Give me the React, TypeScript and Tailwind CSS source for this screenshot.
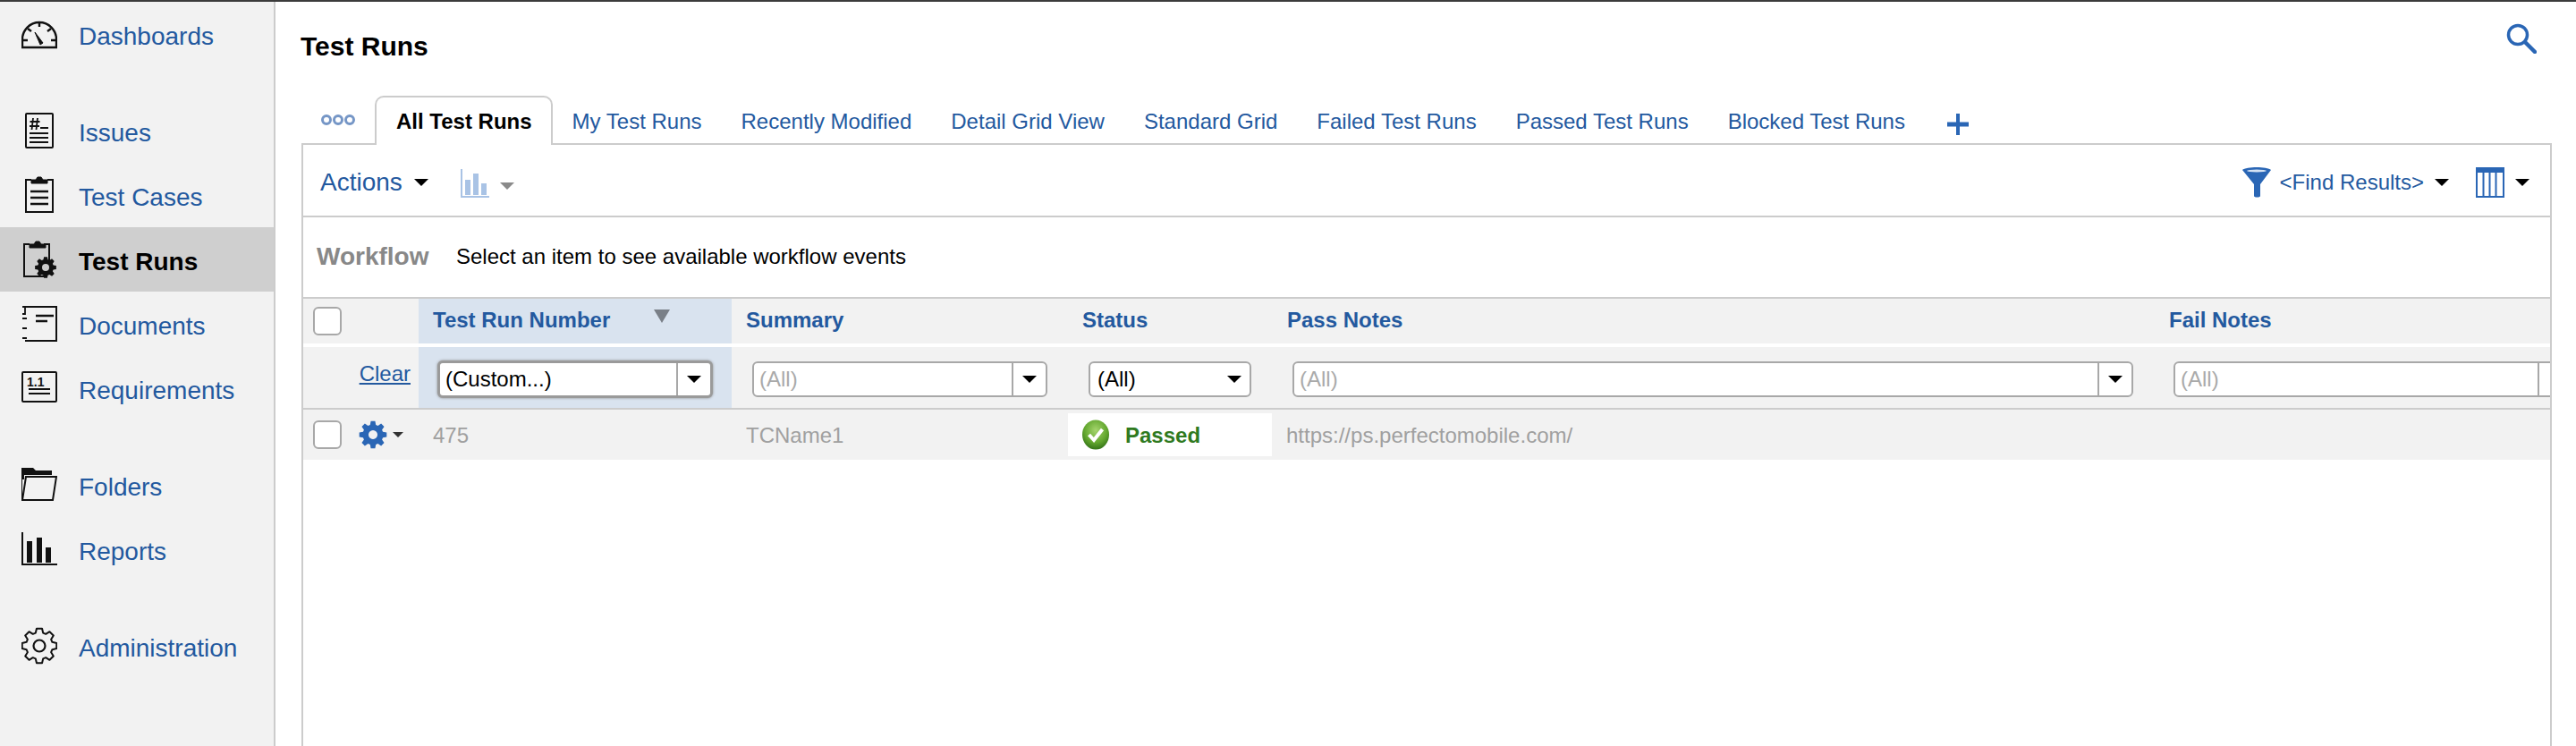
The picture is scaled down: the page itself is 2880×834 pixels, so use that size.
import { ReactNode } from "react";

const BLUE = "#2a66b5";

// builds a toothed wheel outline, used by every gear icon on the page
function gearPath(cx: number, cy: number, outer: number, inner: number, teeth: number) {
  const step = (Math.PI * 2) / teeth;
  const pts: string[] = [];
  for (let i = 0; i < teeth; i++) {
    const a = i * step - Math.PI / 2;
    const list: [number, number][] = [
      [inner, a - step * 0.36],
      [outer, a - step * 0.2],
      [outer, a + step * 0.2],
      [inner, a + step * 0.36],
    ];
    list.forEach(([r, t]) => {
      pts.push(`${(cx + r * Math.cos(t)).toFixed(2)} ${(cy + r * Math.sin(t)).toFixed(2)}`);
    });
  }
  return `M${pts.join("L")}Z`;
}

function NavIcon({ children }: { children: ReactNode }) {
  return (
    <svg width="40" height="48" viewBox="0 0 40 48" className="shrink-0 -mt-[2px]" fill="none" stroke="#111" strokeWidth="2">
      {children}
    </svg>
  );
}

const DashboardIcon = () => (
  <NavIcon>
    <path d="M1 37V28A19 19 0 0 1 39 28V37Z" strokeWidth="2.400" />
    <path d="M20 9v5M7 16l4 3M33 16l-4 3M2 29h5M38 29h-5" strokeWidth="2.400" />
    <path d="M15 20l9 12-3 2Z" fill="#111" strokeWidth="1" />
  </NavIcon>
);

const IssuesIcon = () => (
  <NavIcon>
    <rect x="5" y="3" width="30" height="38" rx="1" />
    <path d="M13 8l-1.500 13M18 8l-1.500 13M9.500 12h11M9 17h11" strokeWidth="1.800" />
    <path d="M21 19h9M9 25h21M9 30h21M9 35h21" strokeWidth="2.200" />
  </NavIcon>
);

const TestCasesIcon = () => (
  <NavIcon>
    <path d="M11 5H5v36h30V5h-6" />
    <path d="M11 9V5h5l2-3h4l2 3h5v4Z" fill="#111" strokeWidth="1" />
    <path d="M10 18h20M10 25h20M10 32h20" strokeWidth="2.400" />
  </NavIcon>
);

const TestRunsIcon = () => (
  <NavIcon>
    <path d="M9 5H3v36h24M31 24V5h-6" />
    <path d="M9 9V5h5l2-3h4l2 3h5v4Z" fill="#111" strokeWidth="1" />
    <path d={gearPath(27, 31, 12, 9, 8)} fill="#111" stroke="none" />
    <circle cx="27" cy="31" r="4" fill="#ccc" stroke="none" />
  </NavIcon>
);

const DocumentsIcon = () => (
  <NavIcon>
    <path d="M4 3h35v38H4" strokeWidth="2" />
    <path d="M1 3h3v8H1M1 16h5M1 27h5M1 38h5" strokeWidth="1.800" />
    <path d="M16 13h20M16 19h13" strokeWidth="2.400" />
  </NavIcon>
);

const RequirementsIcon = () => (
  <NavIcon>
    <rect x="1" y="4" width="38" height="33" rx="1" />
    <text x="6" y="20" fontSize="14" fontWeight="700" fill="#111" stroke="none" fontFamily="'Liberation Sans', sans-serif">1.1</text>
    <path d="M8 23h24M8 28h24" strokeWidth="2.200" />
  </NavIcon>
);

const FoldersIcon = () => (
  <NavIcon>
    <path d="M0 3h13l3 3h18v5H3v5H0Z" fill="#111" stroke="none" />
    <path d="M5 13h34l-4 26H1Z" />
    <path d="M0 8v31" strokeWidth="2" />
  </NavIcon>
);

const ReportsIcon = () => (
  <NavIcon>
    <path d="M1 3v36h39" />
    <rect x="6" y="13" width="6" height="24" fill="#111" stroke="none" />
    <rect x="17" y="9" width="6" height="28" fill="#111" stroke="none" />
    <rect x="27" y="20" width="6" height="17" fill="#111" stroke="none" />
  </NavIcon>
);

const AdminIcon = () => (
  <NavIcon>
    <path d={gearPath(20, 22, 19.500, 15, 8)} strokeLinejoin="round" />
    <circle cx="20" cy="22" r="6.500" strokeWidth="2.200" />
  </NavIcon>
);

const NAV_GROUPS = [
  [{ label: "Dashboards", icon: <DashboardIcon /> }],
  [
    { label: "Issues", icon: <IssuesIcon /> },
    { label: "Test Cases", icon: <TestCasesIcon /> },
    { label: "Test Runs", icon: <TestRunsIcon />, active: true },
    { label: "Documents", icon: <DocumentsIcon /> },
    { label: "Requirements", icon: <RequirementsIcon /> },
  ],
  [
    { label: "Folders", icon: <FoldersIcon /> },
    { label: "Reports", icon: <ReportsIcon /> },
  ],
  [{ label: "Administration", icon: <AdminIcon /> }],
];

const TABS = [
  "My Test Runs",
  "Recently Modified",
  "Detail Grid View",
  "Standard Grid",
  "Failed Test Runs",
  "Passed Test Runs",
  "Blocked Test Runs",
];

function Caret({ color = "#000", w = 16, h = 8 }: { color?: string; w?: number; h?: number }) {
  return (
    <svg width={w} height={h} viewBox="0 0 16 8" className="shrink-0" preserveAspectRatio="none">
      <polygon points="0,0 16,0 8,8" fill={color} />
    </svg>
  );
}

function Checkbox() {
  return <div className="w-[32px] h-[32px] shrink-0 rounded-[6px] border-2 border-[#a8a8a8] bg-white" />;
}

function ComboFilter({ width, drop = "w-[38px]" }: { width: string; drop?: string }) {
  return (
    <div className={`flex h-[40px] ${width} items-stretch rounded-[6px] border-2 border-[#a8a8a8] bg-white`}>
      <span className="flex-1 pl-[6px] leading-[36px] text-[#aaaaaa]">(All)</span>
      <span className={`flex ${drop} items-center justify-center border-l-2 border-[#a8a8a8]`}>
        <Caret />
      </span>
    </div>
  );
}

export default function App() {
  return (
    <div className="flex h-screen flex-col overflow-hidden bg-white font-['Liberation_Sans',Arial,sans-serif] text-[24px] text-[#23599f]">
      <div className="h-[2px] shrink-0 bg-[#3c3c3c]" />
      <div className="flex min-h-0 flex-1">
        {/* Sidebar */}
        <nav className="flex w-[308px] shrink-0 flex-col gap-[36px] border-r-2 border-[#cccccc] bg-[#f2f2f2]">
          {NAV_GROUPS.map((group, i) => (
            <div key={i}>
              {group.map((item) => (
                <div
                  key={item.label}
                  className={`flex h-[72px] items-center gap-[24px] pl-[24px] pt-[6px] text-[28px] ${
                    item.active ? "bg-[#cfcfcf] font-bold text-black" : ""
                  }`}
                >
                  {item.icon}
                  <span>{item.label}</span>
                </div>
              ))}
            </div>
          ))}
        </nav>

        {/* Main */}
        <main className="flex min-w-0 flex-1 flex-col pl-[29px] pr-[27px]">
          <div className="flex h-[105px] shrink-0 justify-between">
            <h1 className="mt-[33px] text-[30px] leading-[34px] font-bold text-black -ml-px">Test Runs</h1>
            <svg width="34" height="34" viewBox="0 0 34 34" className="mt-[24px] mr-[17px]" fill="none" stroke={BLUE}>
              <circle cx="13" cy="13" r="10.500" strokeWidth="3.500" />
              <path d="M21 21l11 11" strokeWidth="4.500" strokeLinecap="round" />
            </svg>
          </div>

          {/* Tabs */}
          <div className="relative z-10 -mb-[2px] flex h-[55px] shrink-0 items-stretch">
            <div className="flex w-[82px] items-center justify-center gap-[1px] pb-[1px]">
              {[0, 1, 2].map((d) => (
                <span key={d} className="h-[12px] w-[12px] rounded-full border-[3px] border-[#7596c6]" />
              ))}
            </div>
            <div className="rounded-t-[10px] border-2 border-b-0 border-[#cccccc] bg-white pl-[22px] pr-[21px] pt-[9px] font-bold text-black">
              All Test Runs
            </div>
            {TABS.map((tab) => (
              <div key={tab} className="px-[22px] pt-[11px]">
                {tab}
              </div>
            ))}
            <svg width="24" height="24" viewBox="0 0 24 24" className="mt-[20px] ml-[25px]" fill={BLUE}>
              <rect x="10" y="0" width="4" height="24" />
              <rect x="0" y="9.500" width="24" height="5" />
            </svg>
          </div>

          {/* Panel */}
          <div className="min-h-0 flex-1 overflow-hidden border-x-2 border-t-2 border-[#cccccc]">
            <div className="flex h-[81px] items-center justify-between border-b-2 border-[#cccccc] pl-[19px] pr-[23px] pt-[4px]">
              <div className="flex items-center">
                <span className="text-[28px]">Actions</span>
                <span className="ml-[13px]">
                  <Caret />
                </span>
                <svg width="32" height="32" viewBox="0 0 32 32" className="ml-[36px] mt-[2px]" fill="#a9c3e5">
                  <rect x="0" y="0" width="2" height="32" />
                  <rect x="0" y="30" width="32" height="2" />
                  <rect x="5" y="12" width="6" height="17" />
                  <rect x="14" y="5" width="6" height="24" />
                  <rect x="23" y="16" width="6" height="13" />
                </svg>
                <span className="ml-[12px] mt-[8px]">
                  <Caret color="#8a8a8a" />
                </span>
              </div>
              <div className="flex items-center">
                <svg width="32" height="34" viewBox="0 0 32 34" fill={BLUE}>
                  <path d="M0 3C4 -1 28 -1 32 3L20 19V32C20 34 13 34 13 32V19Z" />
                  <ellipse cx="16" cy="4" rx="11" ry="1.500" fill="#d5e2f3" />
                </svg>
                <span className="ml-[10px]">&lt;Find Results&gt;</span>
                <span className="ml-[12px]">
                  <Caret />
                </span>
                <svg width="32" height="34" viewBox="0 0 32 34" className="ml-[30px]" fill="none">
                  <rect x="1" y="1" width="30" height="32" stroke={BLUE} strokeWidth="2" />
                  <rect x="0" y="0" width="32" height="6" fill={BLUE} />
                  <path d="M8.500 6v28M15.500 6v28M22.500 6v28" stroke={BLUE} strokeWidth="2" />
                </svg>
                <span className="ml-[12px]">
                  <Caret />
                </span>
              </div>
            </div>

            <div className="flex h-[91px] items-center border-b-2 border-[#cccccc] pl-[15px] pb-[1px]">
              <span className="w-[156px] text-[28px] font-bold text-[#888888]">Workflow</span>
              <span className="text-black">Select an item to see available workflow events</span>
            </div>

            {/* Header row */}
            <div className="grid h-[50px] grid-cols-[129px_350px_376px_228px_986px_1fr] items-stretch bg-[#f2f2f2] font-bold">
              <div className="flex items-center pl-[11px]">
                <Checkbox />
              </div>
              <div className="flex items-center bg-[#d9e3ef] pl-[16px] pb-[2px]">
                <span>Test Run Number</span>
                <svg width="18" height="15" viewBox="0 0 18 15" className="ml-[49px] mb-[10px]">
                  <polygon points="0,0 18,0 9,15" fill="#7a8088" />
                </svg>
              </div>
              <div className="flex items-center pl-[16px] pb-[2px]">Summary</div>
              <div className="flex items-center pl-[16px] pb-[2px]">Status</div>
              <div className="flex items-center pl-[17px] pb-[2px]">Pass Notes</div>
              <div className="flex items-center pl-[17px] pb-[2px]">Fail Notes</div>
            </div>

            {/* Filter row */}
            <div className="mt-[4px] grid h-[70px] grid-cols-[129px_350px_376px_228px_986px_1fr] overflow-hidden border-b-2 border-[#cccccc] bg-[#f2f2f2]">
              <div className="pr-[9px] pt-[16px] text-right underline leading-[28px]">Clear</div>
              <div className="bg-[#d9e3ef] px-[21px] pt-[15px]">
                <div className="flex h-[42px] items-stretch rounded-[6px] border-[3px] border-[#9a9a9a] bg-white shadow-[0_0_3px_#8a8a8a]">
                  <span className="flex-1 pl-[6px] leading-[36px] text-black">(Custom...)</span>
                  <span className="flex w-[38px] items-center justify-center border-l-2 border-[#a8a8a8]">
                    <Caret />
                  </span>
                </div>
              </div>
              <div className="px-[23px] pt-[16px]">
                <ComboFilter width="w-full" />
              </div>
              <div className="px-[23px] pt-[16px]">
                <div className="flex h-[40px] items-center justify-between rounded-[6px] border-2 border-[#a8a8a8] bg-white pl-[8px] pr-[9px] text-black">
                  <span>(All)</span>
                  <Caret />
                </div>
              </div>
              <div className="px-[23px] pt-[16px]">
                <ComboFilter width="w-full" />
              </div>
              <div className="pl-[22px] pt-[16px]">
                <ComboFilter width="w-[469px]" drop="w-[60px]" />
              </div>
            </div>

            {/* Data row */}
            <div className="grid h-[56px] grid-cols-[129px_350px_376px_228px_986px_1fr] items-center bg-[#f2f2f2] text-[#a0a0a0]">
              <div className="flex items-center pl-[11px]">
                <Checkbox />
                <svg width="32" height="32" viewBox="0 0 32 32" className="ml-[19px]">
                  <path fillRule="evenodd" d={`${gearPath(16, 16, 15.500, 11.500, 8)}M16 11a5 5 0 1 0 0.010 0Z`} fill={BLUE} />
                </svg>
                <span className="ml-[6px] text-[#333333]">
                  <Caret color="#333" w={12} h={6} />
                </span>
              </div>
              <div className="pl-[16px] pt-[2px]">475</div>
              <div className="pl-[16px] pt-[2px]">TCName1</div>
              <div className="flex h-[48px] items-center bg-white pl-[15px] font-bold text-[#2f7a1f]">
                <svg width="32" height="34" viewBox="0 0 32 34">
                  <defs>
                    <radialGradient id="passedGlow" cx="50%" cy="35%" r="70%">
                      <stop offset="0%" stopColor="#a5d56d" />
                      <stop offset="60%" stopColor="#62a62e" />
                      <stop offset="100%" stopColor="#2b6a14" />
                    </radialGradient>
                  </defs>
                  <ellipse cx="16" cy="17" rx="15" ry="16.500" fill="url(#passedGlow)" />
                  <path d="M8.500 17l5.500 6 9.500-12" fill="none" stroke="#ffffff" strokeWidth="4" />
                </svg>
                <span className="ml-[17px] pt-[2px]">Passed</span>
              </div>
              <div className="pl-[16px] pt-[2px]">https://ps.perfectomobile.com/</div>
              <div />
            </div>
          </div>
        </main>
      </div>
    </div>
  );
}
